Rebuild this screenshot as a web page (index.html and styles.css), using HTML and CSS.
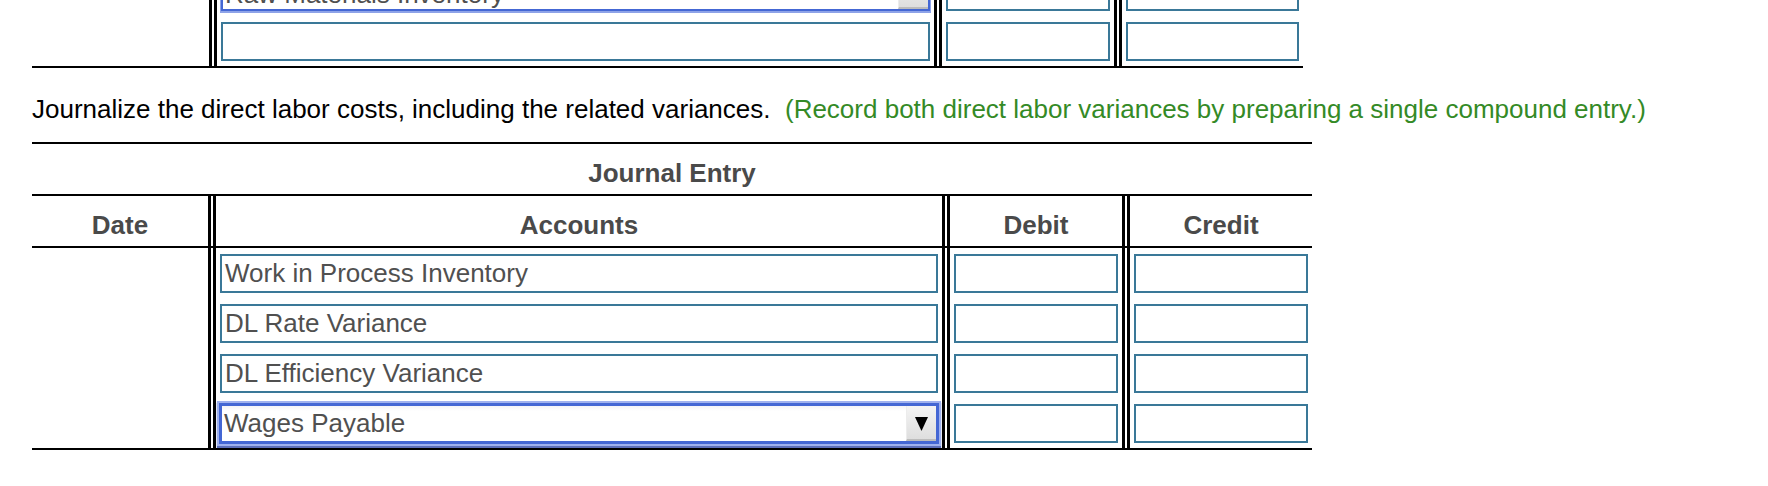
FILE: index.html
```html
<!DOCTYPE html>
<html lang="en">
<head>
<meta charset="utf-8">
<title>Journal Entry</title>
<link rel="stylesheet" href="styles.css">
</head>
<body>
<main class="page">
  <div class="journal journal--prev">
    <div class="cell"></div>
    <div class="cell sep">
      <div class="select select--plain"><span class="select-text">Raw Materials Inventory</span><span class="select-btn"><svg class="arrow" width="13" height="14" viewBox="0 0 13 14"><polygon points="0,0 13,0 6.5,14" fill="#000"/></svg></span></div>
    </div>
    <div class="cell sep"><div class="field"></div></div>
    <div class="cell sep"><div class="field"></div></div>

    <div class="cell"></div>
    <div class="cell sep"><div class="field"></div></div>
    <div class="cell sep"><div class="field"></div></div>
    <div class="cell sep"><div class="field"></div></div>
    <div class="rule"></div>
  </div>

  <p class="prompt">Journalize the direct labor costs, including the related variances.&nbsp; <span class="hint">(Record both direct labor variances by preparing a single compound entry.)</span></p>

  <div class="journal">
    <div class="rule"></div>
    <div class="title">Journal Entry</div>
    <div class="rule"></div>
    <div class="th">Date</div>
    <div class="th sep">Accounts</div>
    <div class="th sep">Debit</div>
    <div class="th sep">Credit</div>
    <div class="rule"></div>

    <div class="cell"></div>
    <div class="cell sep"><div class="field">Work in Process Inventory</div></div>
    <div class="cell sep"><div class="field"></div></div>
    <div class="cell sep"><div class="field"></div></div>

    <div class="cell"></div>
    <div class="cell sep"><div class="field">DL Rate Variance</div></div>
    <div class="cell sep"><div class="field"></div></div>
    <div class="cell sep"><div class="field"></div></div>

    <div class="cell"></div>
    <div class="cell sep"><div class="field">DL Efficiency Variance</div></div>
    <div class="cell sep"><div class="field"></div></div>
    <div class="cell sep"><div class="field"></div></div>

    <div class="cell"></div>
    <div class="cell sep">
      <div class="select select--focus"><span class="select-text">Wages Payable</span><span class="select-btn"><svg class="arrow" width="13" height="14" viewBox="0 0 13 14"><polygon points="0,0 13,0 6.5,14" fill="#000"/></svg></span></div>
    </div>
    <div class="cell sep"><div class="field"></div></div>
    <div class="cell sep"><div class="field"></div></div>
    <div class="rule"></div>
  </div>
</main>
</body>
</html>
```
FILE: styles.css
```css
html, body {
  margin: 0;
  padding: 0;
  background: #ffffff;
}

body {
  font-family: "Liberation Sans", Arial, Helvetica, sans-serif;
  font-size: 26px;
  color: #000000;
  overflow: hidden;
}

.page {
  padding-left: 32px;
}

.journal {
  display: grid;
  grid-template-columns: 176px 734px 180px 190px;
  width: 1280px;
}

.journal--prev {
  grid-template-columns: 177px 725px 180px 189px;
  width: 1271px;
  margin-top: -34px;
}

.rule {
  grid-column: 1 / -1;
  height: 2px;
  background: #000000;
}

.title {
  grid-column: 1 / -1;
  height: 50px;
  box-sizing: border-box;
  padding-top: 14px;
  line-height: 30px;
  text-align: center;
  font-weight: bold;
  color: #4a4a4a;
}

.th {
  height: 50px;
  box-sizing: border-box;
  padding-top: 14px;
  line-height: 30px;
  text-align: center;
  font-weight: bold;
  color: #4a4a4a;
}

.sep {
  border-left: 8px double #000000;
}

.cell {
  height: 50px;
  box-sizing: border-box;
  padding: 6px 4px 5px;
}

.field {
  height: 39px;
  box-sizing: border-box;
  border: 2px solid #3a7898;
  padding: 0 3px;
  line-height: 35px;
  color: #505050;
  white-space: nowrap;
  overflow: hidden;
  background: #ffffff;
}

.select {
  display: flex;
  box-sizing: border-box;
  background: linear-gradient(#f3f3f6, #ffffff 5px);
  color: #505050;
  white-space: nowrap;
}

.select--plain {
  height: 39px;
  border: 2px solid #4467d4;
  box-shadow: 0 1px 0 1px #8ea3e8;
  line-height: 35px;
}

.select--plain .select-text {
  padding-top: 3px;
}

.select--focus {
  height: 41px;
  margin: -1px -1px 0;
  border: 3px solid #4467d4;
  box-shadow: 0 0 0 2px #9fb1ee, 0 2px 1px 2px #5d6fba;
  line-height: 35px;
}

.select-text {
  flex: 1;
  padding-left: 2px;
  overflow: hidden;
}

.select-btn {
  width: 30px;
  flex: none;
  box-sizing: border-box;
  display: flex;
  align-items: center;
  justify-content: center;
  padding-top: 2px;
  background: linear-gradient(#f4f4f4, #dedede);
  border-left: 1px solid #ececec;
  border-bottom: 2px solid #bcbcbc;
}

.arrow {
  display: block;
}

.prompt {
  margin: 26px 0 18px;
  line-height: 30px;
  white-space: nowrap;
}

.hint {
  color: #348a26;
}
```
